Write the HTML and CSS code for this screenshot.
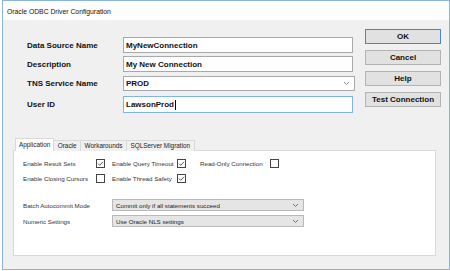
FILE: index.html
```html
<!DOCTYPE html>
<html>
<head>
<meta charset="utf-8">
<link rel="stylesheet" href="styles.css">
</head>
<body>
<div class="window">
  <div class="titlebar">Oracle ODBC Driver Configuration</div>
  <div class="client">
    <div class="top">
      <div class="form">
        <div class="row"><span class="lbl">Data Source Name</span><div class="field">MyNewConnection</div></div>
        <div class="row"><span class="lbl">Description</span><div class="field">My New Connection</div></div>
        <div class="row"><span class="lbl">TNS Service Name</span><div class="field combo">PROD<svg class="chev" width="7" height="5" viewBox="0 0 7 5"><path d="M1 1 L3.5 3.5 L6 1" fill="none" stroke="#777" stroke-width="0.9"/></svg></div></div>
        <div class="row last"><span class="lbl">User ID</span><div class="field focus">LawsonProd<span class="caret"></span></div></div>
      </div>
      <div class="buttons">
        <div class="btn default">OK</div>
        <div class="btn">Cancel</div>
        <div class="btn">Help</div>
        <div class="btn">Test Connection</div>
      </div>
    </div>
    <div class="tabs">
      <div class="tab active">Application</div>
      <div class="tab">Oracle</div>
      <div class="tab">Workarounds</div>
      <div class="tab">SQLServer Migration</div>
    </div>
    <div class="panel">
      <div class="checks">
        <span class="c1">Enable Result Sets</span>
        <svg class="cb" width="9" height="9" viewBox="0 0 9 9"><rect x="0.5" y="0.5" width="8" height="8" fill="#fff" stroke="#444"/><path d="M2 4.6 L3.7 6.3 L7 2.8" fill="none" stroke="#444" stroke-width="0.9"/></svg>
        <span class="c2">Enable Query Timeout</span>
        <svg class="cb" width="9" height="9" viewBox="0 0 9 9"><rect x="0.5" y="0.5" width="8" height="8" fill="#fff" stroke="#444"/><path d="M2 4.6 L3.7 6.3 L7 2.8" fill="none" stroke="#444" stroke-width="0.9"/></svg>
        <span class="c3">Read-Only Connection</span>
        <svg class="cb" width="9" height="9" viewBox="0 0 9 9"><rect x="0.5" y="0.5" width="8" height="8" fill="#fff" stroke="#444"/></svg>
      </div>
      <div class="checks">
        <span class="c1">Enable Closing Cursors</span>
        <svg class="cb" width="9" height="9" viewBox="0 0 9 9"><rect x="0.5" y="0.5" width="8" height="8" fill="#fff" stroke="#444"/></svg>
        <span class="c2">Enable Thread Safety</span>
        <svg class="cb" width="9" height="9" viewBox="0 0 9 9"><rect x="0.5" y="0.5" width="8" height="8" fill="#fff" stroke="#444"/><path d="M2 4.6 L3.7 6.3 L7 2.8" fill="none" stroke="#444" stroke-width="0.9"/></svg>
      </div>
      <div class="srow first"><span class="slbl">Batch Autocommit Mode</span><div class="sel">Commit only if all statements succeed<svg class="chev" width="7" height="5" viewBox="0 0 7 5"><path d="M1 1 L3.5 3.5 L6 1" fill="none" stroke="#666" stroke-width="0.9"/></svg></div></div>
      <div class="srow"><span class="slbl">Numeric Settings</span><div class="sel">Use Oracle NLS settings<svg class="chev" width="7" height="5" viewBox="0 0 7 5"><path d="M1 1 L3.5 3.5 L6 1" fill="none" stroke="#666" stroke-width="0.9"/></svg></div></div>
    </div>
  </div>
</div>
</body>
</html>
```
FILE: styles.css
```css
html, body {
  margin: 0;
  padding: 0;
  background: #ffffff;
  font-family: "Liberation Sans", Arial, sans-serif;
}
.window {
  margin-left: 2px;
  width: 446px;
  border: 1px solid #8ab4de;
  background: #f0f0f0;
}
.titlebar {
  height: 19px;
  background: #ffffff;
  font-size: 6.8px;
  line-height: 21px;
  padding-left: 4px;
  color: #111;
}
.client {
  height: 249px;
  padding-top: 9px;
  box-sizing: border-box;
  background: #f0f0f0;
}
.top {
  display: flex;
  align-items: flex-start;
  padding-left: 24px;
}
.form {
  margin-top: 8px;
  display: flex;
  flex-direction: column;
  gap: 3px;
}
.row {
  display: flex;
  align-items: center;
  height: 16px;
}
.row.last {
  margin-top: 2px;
  height: 17px;
}
.lbl {
  width: 96px;
  font-size: 8px;
  font-weight: bold;
  color: #111;
}
.field {
  position: relative;
  width: 230px;
  height: 100%;
  box-sizing: border-box;
  border: 1px solid #a9a9a9;
  background: #fff;
  font-size: 8px;
  font-weight: bold;
  color: #111;
  padding-left: 2px;
  display: flex;
  align-items: center;
}
.field.combo {
  width: 232px;
  height: 15px;
}
.field.focus {
  border-color: #7eb4ea;
}
.caret {
  display: inline-block;
  width: 1px;
  height: 10px;
  background: #000;
  margin-left: 0.5px;
}
.chev {
  position: absolute;
  right: 4px;
  top: 50%;
  margin-top: -2px;
}
.buttons {
  margin-left: 10px;
  display: flex;
  flex-direction: column;
  gap: 6px;
}
.btn {
  width: 76px;
  height: 15px;
  box-sizing: border-box;
  border: 1px solid #b3b3b3;
  background: #e1e1e1;
  font-size: 8px;
  font-weight: bold;
  color: #111;
  display: flex;
  align-items: center;
  justify-content: center;
}
.btn.default {
  border-color: #4a86c5;
}
.tabs {
  margin-top: 25px;
  margin-left: 12px;
  display: flex;
  align-items: flex-end;
  height: 13px;
  position: relative;
  z-index: 1;
  margin-bottom: -1px;
}
.tab {
  height: 11px;
  box-sizing: border-box;
  border: 1px solid #d9d9d9;
  border-bottom: none;
  margin-left: -1px;
  padding: 0 3.5px;
  font-size: 6.4px;
  line-height: 10px;
  color: #222;
  background: #f0f0f0;
}
.tab:first-child {
  margin-left: 0;
}
.tab.active {
  height: 13px;
  background: #fff;
  line-height: 11px;
  padding: 0 3px;
}
.panel {
  margin-left: 10px;
  width: 423px;
  height: 106px;
  box-sizing: border-box;
  border: 1px solid #d9d9d9;
  background: #fff;
  padding: 6px 0 0 9px;
  font-size: 6.2px;
  color: #333;
}
.checks {
  display: flex;
  align-items: center;
  height: 12px;
  margin-bottom: 3px;
}
.c1 { width: 73px; white-space: nowrap; }
.c2 { width: 65px; margin-left: 7px; white-space: nowrap; }
.c3 { width: 70px; margin-left: 14px; white-space: nowrap; }
.cb { display: block; }
.srow {
  display: flex;
  align-items: center;
  height: 12px;
  margin-top: 4px;
}
.srow.first {
  margin-top: 15px;
}
.slbl {
  width: 89px;
}
.sel {
  position: relative;
  width: 192px;
  height: 12px;
  box-sizing: border-box;
  border: 1px solid #b9b9b9;
  background: #e5e5e5;
  padding-left: 3px;
  display: flex;
  align-items: center;
  color: #222;
}
```
